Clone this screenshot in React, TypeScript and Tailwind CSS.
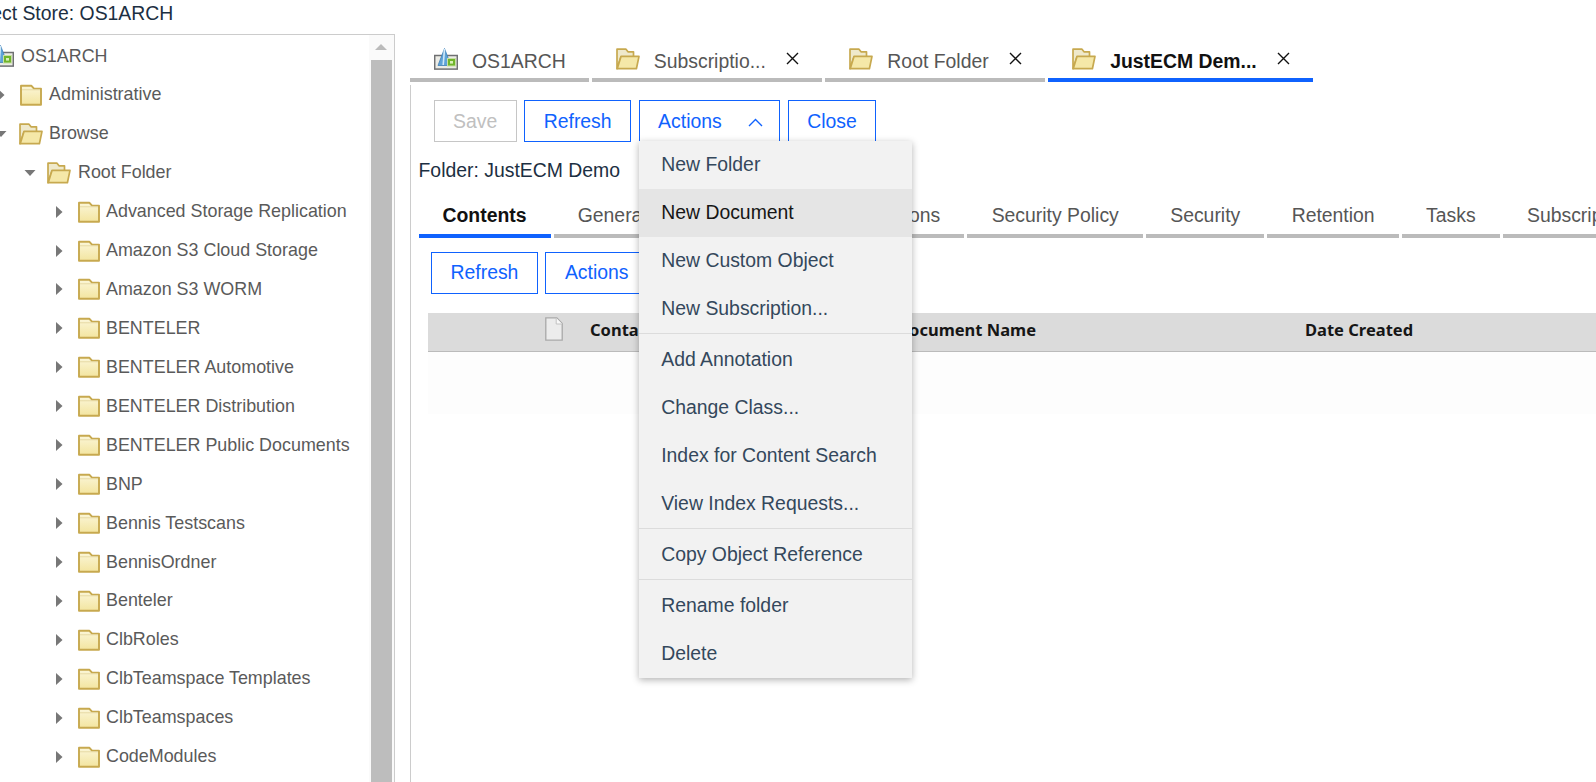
const arial = { fontFamily: '"Liberation Sans", Arial, sans-serif' };

const treeItems = [
    "Advanced Storage Replication",
    "Amazon S3 Cloud Storage",
    "Amazon S3 WORM",
    "BENTELER",
    "BENTELER Automotive",
    "BENTELER Distribution",
    "BENTELER Public Documents",
    "BNP",
    "Bennis Testscans",
    "BennisOrdner",
    "Benteler",
    "ClbRoles",
    "ClbTeamspace Templates",
    "ClbTeamspaces",
    "CodeModules",
];

const innerTabs = ["General", "Properties", "Annotations", "Security Policy", "Security", "Retention", "Tasks", "Subscriptions"];

function FolderIcon() {
    return (
        <svg width="22" height="22" viewBox="0 0 22 22" className="shrink-0">
            <defs>
                <linearGradient id="fc" x1="0" y1="0" x2="0" y2="1">
                    <stop offset="0" stopColor="#fbf6d8" />
                    <stop offset="1" stopColor="#f3e5a0" />
                </linearGradient>
            </defs>
            <path d="M1 20.7V1.8h10.5l2.5 2.8h7v16.1z" fill="url(#fc)" stroke="#c7a94f" strokeWidth="1.9" strokeLinejoin="round" />
            <path d="M2 5.8h18" stroke="#e6d9a4" strokeWidth="1" />
        </svg>
    );
}

function OpenFolderIcon() {
    return (
        <svg width="24" height="22" viewBox="0 0 24 22" className="shrink-0">
            <path d="M1 20.7V1.2h9l2 2.6h5.5v5H5z" fill="#efe9cb" stroke="#c7a94f" strokeWidth="1.7" strokeLinejoin="round" />
            <path d="M1.2 20.7L5 8.4h18l-2.6 12.3z" fill="#f5e8a8" stroke="#c7a94f" strokeWidth="1.7" strokeLinejoin="round" />
        </svg>
    );
}

function StoreIcon() {
    return (
        <svg width="24" height="22" viewBox="0 0 24 22" className="shrink-0">
            <rect x="0.7" y="7.5" width="22.6" height="13.6" fill="#ecece6" stroke="#6f7072" strokeWidth="1.5" />
            <path d="M10.5 0.5L4 17.5h13z" fill="#5fa3d8" stroke="#3f7fb6" strokeWidth="0.8" />
            <path d="M10.5 1L9.2 17" stroke="#cfe8f8" strokeWidth="1.6" />
            <rect x="13.5" y="10.5" width="8" height="7.5" fill="#70b52a" stroke="#c7dfa4" strokeWidth="1" />
            <rect x="16" y="13" width="3" height="2.6" fill="#d8efb8" />
        </svg>
    );
}

function DocIcon() {
    return (
        <svg width="18" height="24" viewBox="0 0 18 24" className="mb-[3px] shrink-0">
            <path d="M0.8 0.8h11l5.4 5.6v16.8H0.8z" fill="#ececec" stroke="#a9a9a9" strokeWidth="1.3" />
            <path d="M11.2 1v6h6" fill="#f8f8f8" stroke="#c2c2c2" strokeWidth="1" />
        </svg>
    );
}

function CloseIcon() {
    return (
        <svg width="13" height="13" viewBox="0 0 13 13" className="shrink-0">
            <path d="M1 1l11 11M12 1L1 12" stroke="#111" strokeWidth="1.4" />
        </svg>
    );
}

function ArrowRight() {
    return (
        <svg width="12" height="14" viewBox="0 0 12 14" className="shrink-0">
            <path d="M3 1L9.5 7 3 13z" fill="#777" />
        </svg>
    );
}

function ArrowDown() {
    return (
        <svg width="12" height="14" viewBox="0 0 12 14" className="shrink-0">
            <path d="M0.5 4h11L6 10z" fill="#777" />
        </svg>
    );
}

function TopTab({ label, icon, active, close }: { label: string; icon: React.ReactNode; active?: boolean; close?: boolean }) {
    return (
        <div className={`flex h-[42px] items-center pl-6 pr-[23px] pb-[1px] border-b-[4.5px] ${active ? 'border-[#0f62fe] font-bold text-[#111]' : 'border-[#bbbbbb] text-[#565656]'}`}>
            {icon}
            <span className="ml-[14px] whitespace-nowrap pt-[6px]">{label}</span>
            {close && <span className="ml-[20.5px] mb-[1px] flex"><CloseIcon /></span>}
        </div>
    );
}

function Btn({ children, disabled, flat }: { children: React.ReactNode; disabled?: boolean; flat?: boolean }) {
    return (
        <button className={`flex h-[42px] items-center border-[1.3px] px-[18.5px] whitespace-nowrap ${flat ? '' : 'pt-[2px]'} ${disabled ? 'border-[#c6c6c6] text-[#c0c0c0]' : 'border-[#0f62fe] text-[#0f62fe]'}`}>
            {children}
        </button>
    );
}

function MenuItem({ label, hover, low }: { label: string; hover?: boolean; low?: boolean }) {
    return (
        <div className={`flex h-[48px] items-center pl-[22.6px] ${low ? 'pt-[2px]' : ''} ${hover ? 'bg-[#e5e5e5] text-[#161616]' : 'text-[#34485c]'}`}>
            {label}
        </div>
    );
}

export default function App() {
    return (
        <div className="flex h-[782px] w-[1596px] overflow-hidden bg-white text-[19.4px]" style={arial}>
            {/* Left tree */}
            <div className="flex h-full w-[395px] shrink-0 flex-col">
                <div className="ml-[-39px] h-[34px] whitespace-nowrap leading-[26px] text-[#1c2f42]">Object Store: OS1ARCH</div>
                <div className="flex min-h-0 flex-1 border-t-[1.5px] border-r-[1.5px] border-[#cccccc]">
                    <div className="min-w-0 flex-1 overflow-hidden pt-[1.5px] text-[17.9px] text-[#5a5a5a]">
                        <div className="ml-[-10px] flex h-[38.93px] items-center gap-[7px]">
                            <StoreIcon />
                            <span>OS1ARCH</span>
                        </div>
                        <div className="ml-[-5px] flex h-[38.93px] items-center">
                            <ArrowRight />
                            <span className="ml-[13px] flex w-[29px]"><FolderIcon /></span>
                            <span>Administrative</span>
                        </div>
                        <div className="ml-[-5px] flex h-[38.93px] items-center">
                            <ArrowDown />
                            <span className="ml-[12px] flex w-[30px]"><OpenFolderIcon /></span>
                            <span>Browse</span>
                        </div>
                        <div className="ml-[24px] flex h-[38.93px] items-center">
                            <ArrowDown />
                            <span className="ml-[11px] flex w-[31px]"><OpenFolderIcon /></span>
                            <span>Root Folder</span>
                        </div>
                        {treeItems.map((item) => (
                            <div key={item} className="ml-[53px] flex h-[38.93px] items-center">
                                <ArrowRight />
                                <span className="ml-[13px] flex w-[28px]"><FolderIcon /></span>
                                <span className="whitespace-nowrap">{item}</span>
                            </div>
                        ))}
                    </div>
                    {/* Scrollbar */}
                    <div className="flex w-[25px] shrink-0 flex-col items-center bg-[#fafafa] pr-[1px]">
                        <div className="flex h-[25px] w-full shrink-0 items-center justify-center pb-[2px]">
                            <div className="h-0 w-0 border-x-[6px] border-b-[6px] border-x-transparent border-b-[#bbbbbb]" />
                        </div>
                        <div className="w-[21px] flex-1 bg-[#bdbdbd]" />
                    </div>
                </div>
            </div>

            {/* Right side */}
            <div className="flex min-w-0 flex-1 flex-col overflow-hidden">
                <div className="ml-[15px] mt-[40px] flex shrink-0 gap-[3px]">
                    <TopTab label="OS1ARCH" icon={<StoreIcon />} />
                    <TopTab label="Subscriptio..." icon={<OpenFolderIcon />} close />
                    <TopTab label="Root Folder" icon={<OpenFolderIcon />} close />
                    <TopTab label="JustECM Dem..." icon={<OpenFolderIcon />} active close />
                </div>

                <div className="ml-[15px] mt-[3px] flex-1 border-l-[1.5px] border-[#cccccc] pt-[15px]">
                    <div className="ml-[22.5px] flex gap-[7.5px]">
                        <Btn disabled>Save</Btn>
                        <Btn>Refresh</Btn>
                        <div className="relative">
                            <Btn>
                                Actions
                                <svg width="15" height="9" viewBox="0 0 15 9" className="ml-[26px] mr-[-2px] shrink-0">
                                    <path d="M1 8l6.5-6.5L14 8" fill="none" stroke="#0f62fe" strokeWidth="1.4" />
                                </svg>
                            </Btn>
                            {/* Dropdown */}
                            <div className="absolute left-0 top-[41px] z-10 w-[273px] bg-[#f2f2f2] pb-[1px] shadow-[0_2px_7px_rgba(0,0,0,0.3)]">
                                <MenuItem label="New Folder" />
                                <MenuItem label="New Document" hover />
                                <MenuItem label="New Custom Object" />
                                <MenuItem label="New Subscription..." />
                                <div className="h-[2px] border-t border-[#dcdcdc]" />
                                <MenuItem label="Add Annotation" low />
                                <MenuItem label="Change Class..." low />
                                <MenuItem label="Index for Content Search" low />
                                <MenuItem label="View Index Requests..." low />
                                <div className="mt-[1px] h-[2px] border-t border-[#dcdcdc]" />
                                <MenuItem label="Copy Object Reference" low />
                                <div className="mt-[1px] h-[2px] border-t border-[#dcdcdc]" />
                                <MenuItem label="Rename folder" low />
                                <MenuItem label="Delete" low />
                            </div>
                        </div>
                        <Btn>Close</Btn>
                    </div>

                    <div className="ml-[7.5px] mt-[14px] leading-[28px] text-[#1c2f42]">Folder: JustECM Demo</div>

                    {/* Inner tabs */}
                    <div className="ml-[7.5px] mt-[11px] flex gap-[3px]">
                        <div className="flex h-[43px] shrink-0 items-center border-b-[4.5px] border-[#0f62fe] px-[24px] pt-[2px] font-bold text-[#111]">Contents</div>
                        {innerTabs.map((tab) => (
                            <div key={tab} className="flex h-[43px] shrink-0 items-center border-b-[4.5px] border-[#bbbbbb] px-[24.2px] pt-[2px] whitespace-nowrap text-[#565656]">
                                {tab}
                            </div>
                        ))}
                    </div>

                    <div className="ml-[20px] mt-[14px] flex gap-[7.5px]">
                        <Btn flat>Refresh</Btn>
                        <Btn flat>Actions</Btn>
                    </div>

                    {/* Table */}
                    <div className="ml-[17px] mt-[19px]">
                        <div className="flex h-[39px] items-center border-b border-[#bbbbbb] bg-[#dbdbdb] pb-[3px] pl-[117px] text-[16.5px] font-bold text-[#161616]" style={{ fontFamily: '"Noto Sans", sans-serif' }}>
                            <DocIcon />
                            <span className="ml-[27px] w-[307px] whitespace-nowrap">Containment Name</span>
                            <span className="w-[408px]">Document Name</span>
                            <span>Date Created</span>
                        </div>
                        <div className="h-[62px] bg-[#fdfdfd]" />
                    </div>
                </div>
            </div>
        </div>
    );
}
